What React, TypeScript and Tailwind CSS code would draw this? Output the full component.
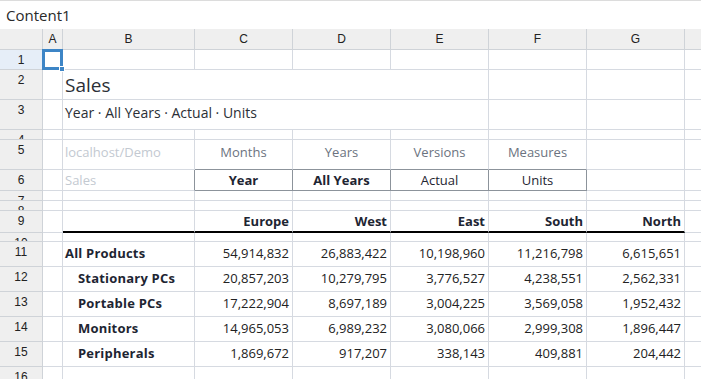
import React from "react";

const LETTERS = ["", "A", "B", "C", "D", "E", "F", "G", ""];

const ROW_HEIGHTS: Record<number, string> = {
  1: "h-[20px]",
  2: "h-[30px]",
  3: "h-[30px]",
  4: "h-[10px]",
  5: "h-[30px]",
  6: "h-[21px]",
  7: "h-[10px]",
  8: "h-[10px]",
  9: "h-[22px]",
  10: "h-[9px]",
  11: "h-[25px]",
  12: "h-[25px]",
  13: "h-[25px]",
  14: "h-[25px]",
  15: "h-[25px]",
  16: "h-[25px]",
};

const regions = ["Europe", "West", "East", "South", "North"];

const products = [
  { name: "All Products", level: 0, values: ["54,914,832", "26,883,422", "10,198,960", "11,216,798", "6,615,651"] },
  { name: "Stationary PCs", level: 1, values: ["20,857,203", "10,279,795", "3,776,527", "4,238,551", "2,562,331"] },
  { name: "Portable PCs", level: 1, values: ["17,222,904", "8,697,189", "3,004,225", "3,569,058", "1,952,432"] },
  { name: "Monitors", level: 1, values: ["14,965,053", "6,989,232", "3,080,066", "2,999,308", "1,896,447"] },
  { name: "Peripherals", level: 1, values: ["1,869,672", "917,207", "338,143", "409,881", "204,442"] },
];

const contexts = [
  { label: "Months", value: "Year", bold: true },
  { label: "Years", value: "All Years", bold: true },
  { label: "Versions", value: "Actual", bold: false },
  { label: "Measures", value: "Units", bold: false },
];

const line = "border-r border-b border-[#d6dae1]";

function RowHeader({ n }: { n: number }) {
  const selected = n === 1;
  return (
    <div
      className={`${ROW_HEIGHTS[n]} overflow-hidden border-r border-b border-[#cfd3d8] text-center text-[12px] leading-[21px] text-[#222] font-['Liberation_Sans',Arial,sans-serif] ${
        selected ? "bg-[#e6eef8]" : "bg-[#efefef]"
      }`}
    >
      {n}
    </div>
  );
}

function Cell({
  h,
  className = "",
  children,
}: {
  h: string;
  className?: string;
  children?: React.ReactNode;
}) {
  return (
    <div className={`${h} relative flex items-center whitespace-nowrap ${className}`}>
      {children}
    </div>
  );
}

export default function App() {
  const rows: React.ReactNode[] = [];

  for (let r = 1; r <= 16; r++) {
    const h = ROW_HEIGHTS[r];
    const cells: React.ReactNode[] = [<RowHeader key={`h${r}`} n={r} />];

    if (r === 1) {
      cells.push(
        <Cell key="a" h={h} className={`${line} z-10`}>
          <div className="absolute inset-[-1px] border-[3px] border-[#3d85c6]" />
          <div className="absolute right-[-3px] bottom-[-3px] w-[6px] h-[6px] bg-[#3d85c6] border border-white" />
        </Cell>
      );
      for (let c = 2; c <= 8; c++) cells.push(<Cell key={c} h={h} className={line} />);
    } else if (r === 2 || r === 3) {
      cells.push(<Cell key="a" h={h} className={line} />);
      cells.push(
        <Cell key="b" h={h} className={`${line} col-span-4 overflow-visible pl-[2px]`}>
          {r === 2 ? (
            <span className="text-[19px] text-[#2b2f36] pt-[1px]">Sales</span>
          ) : (
            <span className="text-[14px] text-[#2b2f36] pb-[4px]">Year · All Years · Actual · Units</span>
          )}
        </Cell>
      );
      for (let c = 6; c <= 8; c++) cells.push(<Cell key={c} h={h} className={line} />);
    } else if (r === 5 || r === 6) {
      cells.push(<Cell key="a" h={h} className={line} />);
      cells.push(
        <Cell
          key="b"
          h={h}
          className={`border-b border-[#d6dae1] border-r pl-[2px] text-[13px] text-[#c3c9d1] ${
            r === 6 ? "!border-r-[#8c939b]" : ""
          } ${r === 5 ? "pb-[3px]" : "pt-[1px]"}`}
        >
          {r === 5 ? "localhost/Demo" : "Sales"}
        </Cell>
      );
      contexts.forEach((ctx, i) =>
        cells.push(
          <Cell
            key={`c${i}`}
            h={h}
            className={`justify-center text-[13px] border-r border-b ${
              r === 5
                ? "border-r-[#d6dae1] border-b-[#8c939b] text-[#6b7380] pb-[3px]"
                : `border-[#8c939b] text-[#1e2532] pt-[2px] ${ctx.bold ? "font-bold" : ""}`
            }`}
          >
            {r === 5 ? ctx.label : ctx.value}
          </Cell>
        )
      );
      for (let c = 7; c <= 8; c++) cells.push(<Cell key={c} h={h} className={line} />);
    } else if (r === 9) {
      cells.push(<Cell key="a" h={h} className={line} />);
      cells.push(<Cell key="b" h={h} className="border-r border-r-[#d6dae1] border-b-2 border-b-black" />);
      regions.forEach((reg) =>
        cells.push(
          <Cell
            key={reg}
            h={h}
            className="justify-end pr-[3px] pt-[2px] text-[13px] font-bold text-[#1e2532] border-r border-r-[#d6dae1] border-b-2 border-b-black"
          >
            {reg}
          </Cell>
        )
      );
      cells.push(<Cell key="h" h={h} className={line} />);
    } else if (r >= 11 && r <= 15) {
      const p = products[r - 11];
      cells.push(<Cell key="a" h={h} className={line} />);
      cells.push(
        <Cell
          key="b"
          h={h}
          className={`${line} text-[13px] font-bold tracking-[0.2px] text-[#1e2532] ${p.level ? "pl-[15px]" : "pl-[2px]"}`}
        >
          {p.name}
        </Cell>
      );
      p.values.forEach((v, i) =>
        cells.push(
          <Cell key={`v${i}`} h={h} className={`${line} justify-end pr-[3px] text-[13px] text-[#222]`}>
            {v}
          </Cell>
        )
      );
      cells.push(<Cell key="h" h={h} className={line} />);
    } else {
      for (let c = 1; c <= 8; c++) cells.push(<Cell key={c} h={h} className={line} />);
    }

    rows.push(<React.Fragment key={r}>{cells}</React.Fragment>);
  }

  return (
    <div className="w-[701px] h-[379px] overflow-hidden bg-white font-['Open_Sans','Noto_Sans',sans-serif]">
      <div className="h-[29px] border-t border-[#dcdcdc] flex items-center pl-[6px] text-[15px] text-[#2a2a2a]">
        Content1
      </div>
      <div className="grid grid-cols-[43px_20px_132px_98px_98px_98px_98px_98px_60px]">
        {LETTERS.map((l, i) => (
          <div
            key={i}
            className="h-[21px] bg-[#efefef] border-r border-b border-[#cfd3d8] flex items-center justify-center text-[12px] text-[#222] font-['Liberation_Sans',Arial,sans-serif]"
          >
            {l}
          </div>
        ))}
        {rows}
      </div>
    </div>
  );
}
